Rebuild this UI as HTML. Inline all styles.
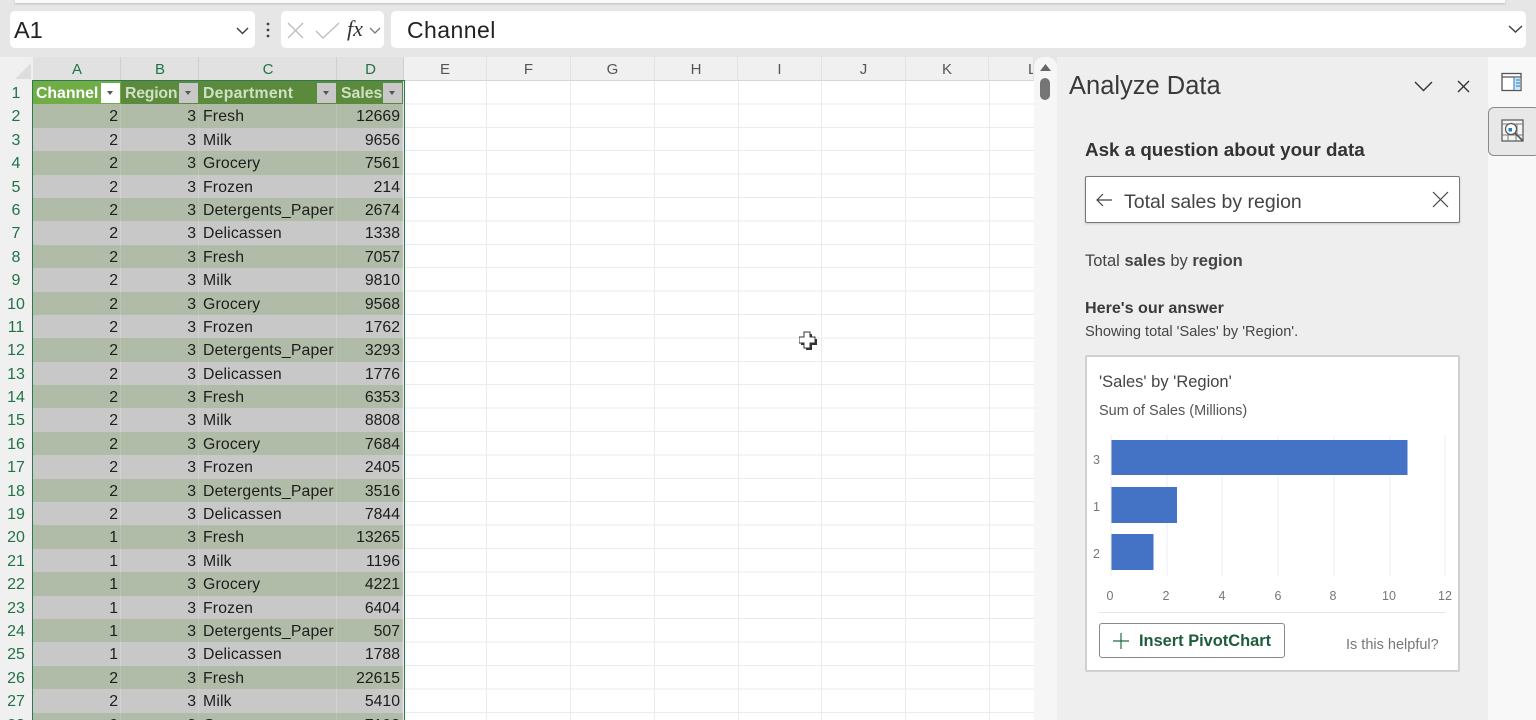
<!DOCTYPE html>
<html><head><meta charset="utf-8"><style>
*{box-sizing:border-box}
html,body{margin:0;padding:0;width:1536px;height:720px;overflow:hidden;background:#e6e6e6;font-family:"Liberation Sans",sans-serif;color:#222}
#page{position:absolute;left:0;top:0;width:1536px;height:720px;overflow:hidden;background:#e6e6e6}
.a{position:absolute}
.box{position:absolute;background:#fff;border-radius:5px}
.t{position:absolute;white-space:nowrap}
#grid{position:absolute;left:404px;top:81px;width:630px;height:639px;background-color:#fff;
background-image:repeating-linear-gradient(to bottom,transparent 0,transparent 22.4px,#ebebeb 22.4px,#ebebeb 23.4px),linear-gradient(#ebebeb,#ebebeb),linear-gradient(#ebebeb,#ebebeb),linear-gradient(#ebebeb,#ebebeb),linear-gradient(#ebebeb,#ebebeb),linear-gradient(#ebebeb,#ebebeb),linear-gradient(#ebebeb,#ebebeb),linear-gradient(#ebebeb,#ebebeb);
background-size:100% 100%,1px 100%,1px 100%,1px 100%,1px 100%,1px 100%,1px 100%,1px 100%;
background-position:0 0,82px 0,166px 0,250px 0,334px 0,417px 0,501px 0,585px 0;background-repeat:repeat,no-repeat,no-repeat,no-repeat,no-repeat,no-repeat,no-repeat,no-repeat}
.ch{position:absolute;top:57px;height:24px;line-height:25px;text-align:center;font-size:15px;color:#555;background:#f0f0f0;border-right:1px solid #e2e2e2;border-bottom:1px solid #d6d6d6}
.ch.s{background:#e1e1e1;color:#217346;border-right:1px solid #d0d0d0;border-bottom:none;padding-left:1px}
#rows{position:absolute;left:0;top:81px;width:404px;height:639px;overflow:hidden}
.r{display:grid;grid-template-columns:33px 88px 78px 138px 66px;height:23.4px;line-height:25.6px;font-size:15.8px;color:#1d1d1d}
.r>*{font-style:normal;font-weight:normal;display:block;overflow:visible;white-space:nowrap;padding-right:2px;text-align:right;border-right:1px solid rgba(255,255,255,.12);border-bottom:1px solid #9fb093}
.r>b{background:#f0f0f0;color:#217346;text-align:center;padding:0;border:0;border-right:1px solid #e2e2e2;border-bottom:1px solid #e6e6e6;font-size:16px}
.r>u{text-decoration:none;text-align:left;padding:0 0 0 4px;letter-spacing:.16px}
.g>i,.g>u{background:#b0bca8}
.y>i,.y>u{background:#c8c8c8;border-bottom-color:#b6bfaf;border-right-color:#d3d3d3}
.h{color:#cfe0c4}
.h>i{background:#5b8a3c;text-align:left;padding:0 0 0 4px;border:0;font-weight:bold;position:relative;height:23.4px}
.h>i:nth-child(2){background:#70ad47;color:#fff;padding-left:3px}
.h>i s{position:absolute;right:1px;top:2px;width:19px;height:20px;background:#c8c8c8;text-decoration:none}
.h>i:nth-child(2) s{background:#fff}
.h>i s:after{content:"";position:absolute;left:6px;top:8px;border-left:3.5px solid transparent;border-right:3.5px solid transparent;border-top:4px solid #555}
.grid-sel{position:absolute;left:32px;top:80px;width:373px;height:640px;border:1.5px solid #2b7a50;border-bottom:0;pointer-events:none}
</style></head><body><div id="page">
<div class="a" style="left:15px;top:0;width:1490px;height:3px;background:#fafafa;box-shadow:0 1px 2px #bbb"></div>

<div class="box" style="left:10px;top:11px;width:245px;height:37px"></div>
<div class="t" style="left:14px;top:16px;font-size:23.5px;line-height:28px;color:#222">A1</div>
<svg class="a" style="left:235px;top:25px" width="16" height="12"><path d="M2 3l5.500 5.500L13 3" fill="none" stroke="#444" stroke-width="1.500"/></svg>
<svg class="a" style="left:264px;top:21px" width="8" height="18"><circle cx="4" cy="3" r="1.400" fill="#444"/><circle cx="4" cy="9" r="1.400" fill="#444"/><circle cx="4" cy="15" r="1.400" fill="#444"/></svg>
<div class="box" style="left:281px;top:11px;width:103px;height:37px"></div>
<svg class="a" style="left:285px;top:20px" width="100" height="22"><path d="M3 3l15 15M18 3L3 18M31 11l7 7L54 3" fill="none" stroke="#bdbdbd" stroke-width="1.300"/><path d="M85 8l5 5 5-5" fill="none" stroke="#777" stroke-width="1.300"/></svg>
<div class="t" style="left:347px;top:15px;font:italic 22px/28px 'Liberation Serif',serif;color:#333">fx</div>
<div class="box" style="left:391px;top:11px;width:1135px;height:37px"></div>
<div class="t" style="left:407px;top:16px;font-size:23px;line-height:28px;color:#222;letter-spacing:.45px">Channel</div>
<svg class="a" style="left:1507px;top:23px" width="18" height="12"><path d="M2 3l6.500 6L15 3" fill="none" stroke="#444" stroke-width="1.500"/></svg>

<div class="a" style="left:0;top:57px;width:33px;height:24px;background:#f0f0f0"></div>
<svg class="a" style="left:14px;top:62px" width="18" height="18"><path d="M17 1v16H1z" fill="#ddd"/></svg>
<div class="ch s" style="left:33px;width:88px">A</div>
<div class="ch s" style="left:121px;width:78px">B</div>
<div class="ch s" style="left:199px;width:138px">C</div>
<div class="ch s" style="left:337px;width:67px">D</div>
<div class="ch" style="left:404px;width:83px">E</div>
<div class="ch" style="left:487px;width:84px">F</div>
<div class="ch" style="left:571px;width:84px">G</div>
<div class="ch" style="left:655px;width:83px">H</div>
<div class="ch" style="left:738px;width:84px">I</div>
<div class="ch" style="left:822px;width:84px">J</div>
<div class="ch" style="left:906px;width:83px">K</div>
<div class="ch" style="left:989px;width:45px;text-align:left;padding-left:39px;overflow:hidden">L</div>

<div id="grid"></div>
<div id="rows">
<div class="r h"><b>1</b><i>Channel<s></s></i><i style="letter-spacing:-.2px">Region<s></s></i><i style="letter-spacing:.25px">Department<s></s></i><i>Sales<s></s></i></div>
<div class="r g"><b>2</b><i>2</i><i>3</i><u>Fresh</u><i>12669</i></div>
<div class="r y"><b>3</b><i>2</i><i>3</i><u>Milk</u><i>9656</i></div>
<div class="r g"><b>4</b><i>2</i><i>3</i><u>Grocery</u><i>7561</i></div>
<div class="r y"><b>5</b><i>2</i><i>3</i><u>Frozen</u><i>214</i></div>
<div class="r g"><b>6</b><i>2</i><i>3</i><u>Detergents_Paper</u><i>2674</i></div>
<div class="r y"><b>7</b><i>2</i><i>3</i><u>Delicassen</u><i>1338</i></div>
<div class="r g"><b>8</b><i>2</i><i>3</i><u>Fresh</u><i>7057</i></div>
<div class="r y"><b>9</b><i>2</i><i>3</i><u>Milk</u><i>9810</i></div>
<div class="r g"><b>10</b><i>2</i><i>3</i><u>Grocery</u><i>9568</i></div>
<div class="r y"><b>11</b><i>2</i><i>3</i><u>Frozen</u><i>1762</i></div>
<div class="r g"><b>12</b><i>2</i><i>3</i><u>Detergents_Paper</u><i>3293</i></div>
<div class="r y"><b>13</b><i>2</i><i>3</i><u>Delicassen</u><i>1776</i></div>
<div class="r g"><b>14</b><i>2</i><i>3</i><u>Fresh</u><i>6353</i></div>
<div class="r y"><b>15</b><i>2</i><i>3</i><u>Milk</u><i>8808</i></div>
<div class="r g"><b>16</b><i>2</i><i>3</i><u>Grocery</u><i>7684</i></div>
<div class="r y"><b>17</b><i>2</i><i>3</i><u>Frozen</u><i>2405</i></div>
<div class="r g"><b>18</b><i>2</i><i>3</i><u>Detergents_Paper</u><i>3516</i></div>
<div class="r y"><b>19</b><i>2</i><i>3</i><u>Delicassen</u><i>7844</i></div>
<div class="r g"><b>20</b><i>1</i><i>3</i><u>Fresh</u><i>13265</i></div>
<div class="r y"><b>21</b><i>1</i><i>3</i><u>Milk</u><i>1196</i></div>
<div class="r g"><b>22</b><i>1</i><i>3</i><u>Grocery</u><i>4221</i></div>
<div class="r y"><b>23</b><i>1</i><i>3</i><u>Frozen</u><i>6404</i></div>
<div class="r g"><b>24</b><i>1</i><i>3</i><u>Detergents_Paper</u><i>507</i></div>
<div class="r y"><b>25</b><i>1</i><i>3</i><u>Delicassen</u><i>1788</i></div>
<div class="r g"><b>26</b><i>2</i><i>3</i><u>Fresh</u><i>22615</i></div>
<div class="r y"><b>27</b><i>2</i><i>3</i><u>Milk</u><i>5410</i></div>
<div class="r g"><b>28</b><i>2</i><i>3</i><u>Grocery</u><i>7198</i></div>
</div>
<div class="grid-sel"></div>

<svg class="a" style="left:799px;top:331px" width="20" height="20"><path d="M5 1h6v5h5v6h-5v5H5v-5H0V6h5z" transform="translate(2 2)" fill="#333"/><path d="M5 1h6v5h5v6h-5v5H5v-5H0V6h5z" fill="#fff" stroke="#333" stroke-width="1"/></svg>

<div class="a" style="left:1034px;top:57px;width:23px;height:663px;background:#f6f6f6;border-radius:10px 10px 0 0"></div>
<svg class="a" style="left:1039px;top:63px" width="13" height="9"><path d="M6.500 1L12 8H1z" fill="#666"/></svg>
<div class="a" style="left:1040px;top:78px;width:10px;height:22px;border-radius:5px;background:#757575"></div>

<div class="a" style="left:1057px;top:57px;width:431px;height:663px;background:#eeeeee"></div>
<div class="a" style="left:1488px;top:57px;width:48px;height:663px;background:#f8f8f8"></div>
<div class="t" style="left:1069px;top:70px;font-size:25.5px;line-height:32px;color:#3a3a3a">Analyze Data</div>
<svg class="a" style="left:1412px;top:78px" width="62" height="18"><path d="M3 4l8.500 8.500L20 4M46 3l11 11M57 3L46 14" fill="none" stroke="#333" stroke-width="1.400"/></svg>
<div class="t" style="left:1085px;top:137px;font-size:18.8px;line-height:25px;font-weight:bold;color:#333">Ask a question about your data</div>
<div class="a" style="left:1085px;top:176px;width:375px;height:47px;background:#fff;border:1px solid #777;border-radius:2px;box-shadow:0 1px 2px #ccc"></div>
<svg class="a" style="left:1095px;top:191px" width="20" height="18"><path d="M2 9h15M8 3L2 9l6 6" fill="none" stroke="#444" stroke-width="1.200"/></svg>
<div class="t" style="left:1124px;top:189px;font-size:19.5px;line-height:26px;color:#444">Total sales by region</div>
<svg class="a" style="left:1432px;top:191px" width="17" height="17"><path d="M1 1l15 15M16 1L1 16" fill="none" stroke="#444" stroke-width="1.200"/></svg>
<div class="t" style="left:1085px;top:251px;font-size:16.5px;line-height:21px;color:#444">Total <b>sales</b> by <b>region</b></div>
<div class="t" style="left:1085px;top:298px;font-size:16.1px;line-height:20px;font-weight:bold;color:#3a3a3a">Here's our answer</div>
<div class="t" style="left:1085px;top:323px;font-size:14.6px;line-height:18px;color:#444">Showing total 'Sales' by 'Region'.</div>

<div class="a" style="left:1085px;top:355px;width:375px;height:317px;background:#fff;border:2px solid #d0d0d0;border-radius:2px"></div>
<div class="t" style="left:1099px;top:372px;font-size:16.5px;line-height:21px;color:#444">'Sales' by 'Region'</div>
<div class="t" style="left:1099px;top:402px;font-size:14.5px;line-height:18px;color:#555">Sum of Sales (Millions)</div>
<svg class="a" style="left:1090px;top:430px" width="370" height="180" font-family="Liberation Sans" font-size="12.500" fill="#777">
<path d="M21 5v141M77 5v141M132 5v141M188 5v141M244 5v141M300 5v141M355 5v141" stroke="#eeeeee" stroke-width="1" fill="none"/>
<rect x="21.500" y="10" width="296" height="35" fill="#4472c4"/><rect x="21.500" y="57" width="65.500" height="36" fill="#4472c4"/><rect x="21.500" y="104" width="42" height="36" fill="#4472c4"/>
<text x="3" y="34">3</text><text x="3" y="81">1</text><text x="3" y="128">2</text>
<text x="20" y="170" text-anchor="middle">0</text><text x="76" y="170" text-anchor="middle">2</text><text x="132" y="170" text-anchor="middle">4</text><text x="188" y="170" text-anchor="middle">6</text><text x="243" y="170" text-anchor="middle">8</text><text x="299" y="170" text-anchor="middle">10</text><text x="355" y="170" text-anchor="middle">12</text>
</svg>
<div class="a" style="left:1099px;top:612px;width:347px;height:1px;background:#e6e6e6"></div>
<div class="a" style="left:1099px;top:623px;width:186px;height:35px;border:1px solid #8a8a8a;border-radius:3px;background:#fff"></div>
<svg class="a" style="left:1112px;top:632px" width="19" height="19"><path d="M9 1v16M1 9h16" stroke="#1f6e43" stroke-width="1.200" fill="none"/></svg>
<div class="t" style="left:1139px;top:631px;font-size:16.4px;line-height:21px;font-weight:bold;color:#1e5c3a">Insert PivotChart</div>
<div class="t" style="left:1346px;top:636px;font-size:14.5px;line-height:18px;color:#777">Is this helpful?</div>

<svg class="a" style="left:1501px;top:72px" width="22" height="20"><rect x="1" y="1.500" width="19" height="17" fill="#fff" stroke="#555" stroke-width="1.300"/><path d="M1 5h19" stroke="#555" stroke-width="1.300"/><rect x="13" y="5.500" width="6.500" height="12.500" fill="#cfe4f5"/><path d="M13 5v13" stroke="#1f7fc4"/><path d="M15 8h4M15 11h4M15 14h4" stroke="#1f7fc4"/></svg>
<div class="a" style="left:1488px;top:107px;width:52px;height:49px;background:#e8e8e8;border:1px solid #8a8a8a;border-radius:6px"></div>
<svg class="a" style="left:1501px;top:119px" width="24" height="24"><rect x="1" y="1" width="21" height="21" fill="#f4f4f4" stroke="#555" stroke-width="1.200"/><path d="M1 5h21M1 16h21M7 16v6M15 16v6M16 5v11" stroke="#777"/><circle cx="10" cy="10" r="5.500" fill="#fff" stroke="#555" stroke-width="1.200"/><rect x="7.500" y="9" width="3.500" height="3.500" fill="#1f7fc4"/><path d="M14 14l8 8" stroke="#555" stroke-width="1.600"/></svg>
</div></body></html>
